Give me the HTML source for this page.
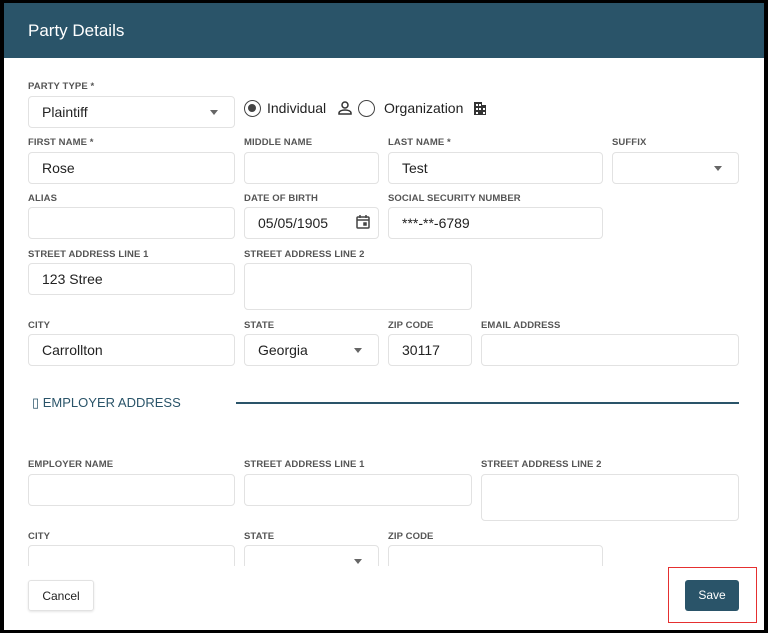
<!DOCTYPE html>
<html><head><style>
*{box-sizing:border-box;margin:0;padding:0}
body{width:768px;height:633px;background:#000;position:relative;overflow:hidden;font-family:"Liberation Sans",sans-serif}
#p{position:absolute;left:4px;top:3px;width:760px;height:627px;background:#fff;overflow:hidden}
#h{position:absolute;left:0;top:0;width:760px;height:55px;background:#2a5469;color:#fff;font-size:17px;line-height:55px;padding-left:24px}
.l{position:absolute;font-size:9.5px;font-weight:bold;color:#555;letter-spacing:.1px}
.i{position:absolute;border:1px solid #e2e2e2;border-radius:4px;height:32px;font-size:14px;color:#222;line-height:30px;padding-left:13px;background:#fff}
.a:after{content:"";position:absolute;right:16px;top:13px;border:4px solid transparent;border-top:5px solid #666}
.b{position:absolute;border-radius:3px;font-size:12px;text-align:center;line-height:30px;height:31px}
</style></head><body><div id="p">
<div id="h">Party Details</div>
<div class="l" style="left:24px;top:78px">PARTY TYPE *</div>
<div class="i a" style="left:24px;top:93px;width:207px">Plaintiff</div>
<div style="position:absolute;left:240px;top:97px;width:17px;height:17px;border:1.5px solid #444;border-radius:50%"><div style="margin:3px;width:8px;height:8px;border-radius:50%;background:#444"></div></div>
<div style="position:absolute;left:263px;top:97px;font-size:14px;color:#222">Individual</div>
<svg style="position:absolute;left:333px;top:97px" width="16" height="16" viewBox="0 0 16 16" fill="none" stroke="#333" stroke-width="1.5"><circle cx="8" cy="5" r="3"/><path d="M2 14v-1c0-2 3-3 6-3s6 1 6 3v1z"/></svg>
<div style="position:absolute;left:354px;top:97px;width:17px;height:17px;border:1.5px solid #444;border-radius:50%"></div>
<div style="position:absolute;left:380px;top:97px;font-size:14px;color:#222">Organization</div>
<svg style="position:absolute;left:468px;top:97px" width="16" height="16" viewBox="0 0 16 16" fill="#333"><path d="M2 2h8v3h4v10H2z"/><g fill="#fff"><rect x="4" y="4" width="2" height="2"/><rect x="7" y="4" width="2" height="2"/><rect x="4" y="8" width="2" height="2"/><rect x="7" y="8" width="2" height="2"/><rect x="11" y="8" width="2" height="2"/><rect x="4" y="12" width="2" height="2"/><rect x="11" y="12" width="2" height="2"/></g></svg>

<div class="l" style="left:24px;top:134px">FIRST NAME *</div><div class="i" style="left:24px;top:149px;width:207px">Rose</div>
<div class="l" style="left:240px;top:134px">MIDDLE NAME</div><div class="i" style="left:240px;top:149px;width:135px"></div>
<div class="l" style="left:384px;top:134px">LAST NAME *</div><div class="i" style="left:384px;top:149px;width:215px">Test</div>
<div class="l" style="left:608px;top:134px">SUFFIX</div><div class="i a" style="left:608px;top:149px;width:127px"></div>

<div class="l" style="left:24px;top:190px">ALIAS</div><div class="i" style="left:24px;top:204px;width:207px"></div>
<div class="l" style="left:240px;top:190px">DATE OF BIRTH</div><div class="i" style="left:240px;top:204px;width:135px">05/05/1905</div>
<svg style="position:absolute;left:351px;top:211px" width="16" height="16" viewBox="0 0 16 16" fill="none" stroke="#444" stroke-width="1.5"><rect x="2" y="3" width="12" height="11" rx="1"/><path d="M2 6h12M5 1v3M11 1v3"/><rect x="9" y="9" width="2" height="2" fill="#444"/></svg>
<div class="l" style="left:384px;top:190px">SOCIAL SECURITY NUMBER</div><div class="i" style="left:384px;top:204px;width:215px">***-**-6789</div>

<div class="l" style="left:24px;top:246px">STREET ADDRESS LINE 1</div><div class="i" style="left:24px;top:260px;width:207px">123 Stree</div>
<div class="l" style="left:240px;top:246px">STREET ADDRESS LINE 2</div><div class="i" style="left:240px;top:260px;width:228px;height:47px"></div>

<div class="l" style="left:24px;top:317px">CITY</div><div class="i" style="left:24px;top:331px;width:207px">Carrollton</div>
<div class="l" style="left:240px;top:317px">STATE</div><div class="i a" style="left:240px;top:331px;width:135px">Georgia</div>
<div class="l" style="left:384px;top:317px">ZIP CODE</div><div class="i" style="left:384px;top:331px;width:84px">30117</div>
<div class="l" style="left:477px;top:317px">EMAIL ADDRESS</div><div class="i" style="left:477px;top:331px;width:258px"></div>

<div style="position:absolute;left:28px;top:392px;font-size:13px;color:#2a5469">▯ EMPLOYER ADDRESS</div>
<div style="position:absolute;left:232px;top:399px;width:503px;height:2px;background:#2a5469"></div>

<div class="l" style="left:24px;top:456px">EMPLOYER NAME</div><div class="i" style="left:24px;top:471px;width:207px"></div>
<div class="l" style="left:240px;top:456px">STREET ADDRESS LINE 1</div><div class="i" style="left:240px;top:471px;width:228px"></div>
<div class="l" style="left:477px;top:456px">STREET ADDRESS LINE 2</div><div class="i" style="left:477px;top:471px;width:258px;height:47px"></div>

<div style="position:absolute;left:0;top:528px;width:760px;height:35px;overflow:hidden">
<div class="l" style="left:24px;top:0">CITY</div><div class="i" style="left:24px;top:14px;width:207px"></div>
<div class="l" style="left:240px;top:0">STATE</div><div class="i a" style="left:240px;top:14px;width:135px"></div>
<div class="l" style="left:384px;top:0">ZIP CODE</div><div class="i" style="left:384px;top:14px;width:215px"></div>
</div>

<div class="b" style="left:24px;top:577px;width:66px;border:1px solid #e2e2e2;color:#222;box-shadow:0 1px 2px rgba(0,0,0,.1)">Cancel</div>
<div class="b" style="left:681px;top:577px;width:54px;background:#2a5469;color:#fff">Save</div>
<div style="position:absolute;left:664px;top:564px;width:89px;height:56px;border:1.5px solid #e53030"></div>
</div></body></html>
